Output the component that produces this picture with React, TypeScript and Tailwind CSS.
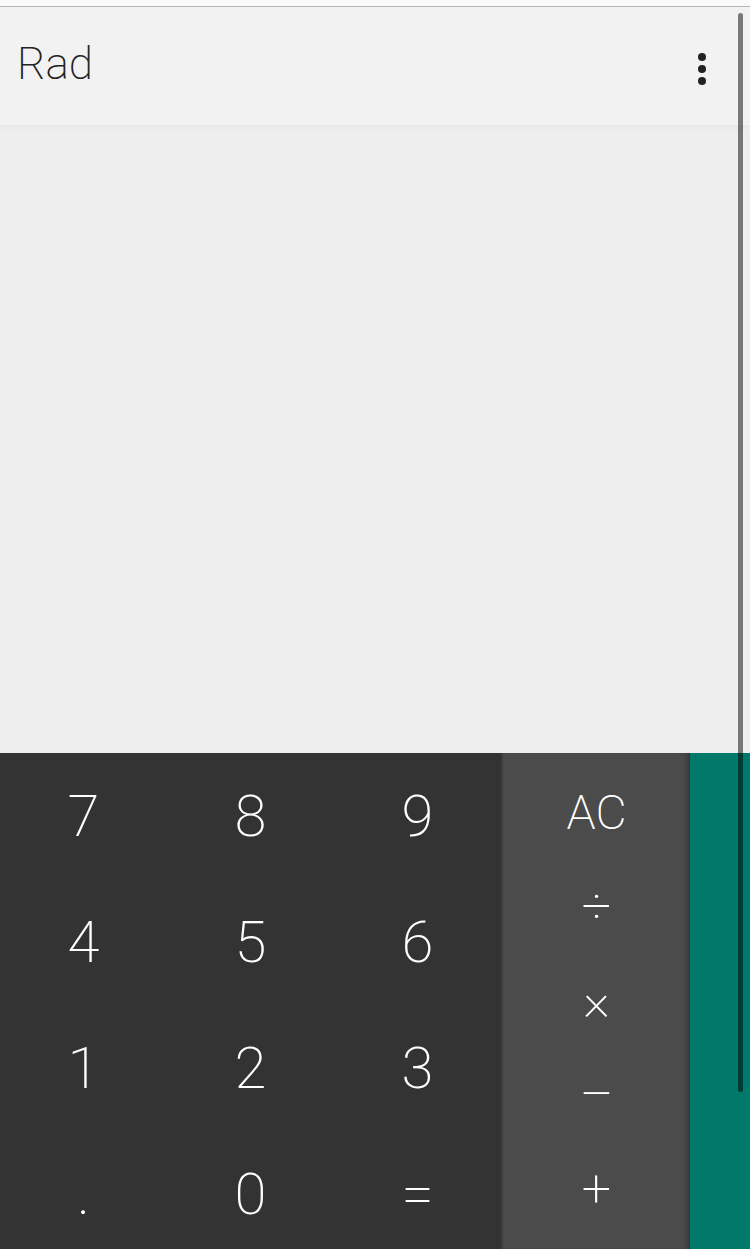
import React from "react";

const digits = ["7", "8", "9", "4", "5", "6", "1", "2", "3", ".", "0", "="];
const ops = ["AC", "÷", "×", "–", "+"];

export default function App() {
  return (
    <div
      className="relative w-[750px] h-[1249px] overflow-hidden flex flex-col bg-[#eeeeee]"
      style={{ fontFamily: "Roboto, 'Noto Sans', sans-serif" }}
    >
      {/* status strip */}
      <div className="h-[7px] bg-[#fafafa] border-b border-[#b8b8b8] shrink-0" />

      {/* display */}
      <div className="flex-1 flex flex-col bg-[#eeeeee]">
        <div className="h-[118px] bg-[#f2f2f2] shadow-[0_2px_6px_rgba(0,0,0,0.04)] flex items-start justify-between pl-[17px] pr-[44px] pt-[31px]">
          <span className="text-[44px] leading-[52px] font-extralight text-[#222]">Rad</span>
          <div className="flex flex-col gap-[4px] pt-[15px]">
            <span className="w-[8px] h-[8px] rounded-full bg-[#222]" />
            <span className="w-[8px] h-[8px] rounded-full bg-[#222]" />
            <span className="w-[8px] h-[8px] rounded-full bg-[#222]" />
          </div>
        </div>
      </div>

      {/* keypad */}
      <div className="h-[496px] flex shrink-0 overflow-hidden">
        <div className="w-[501px] grid grid-cols-3 grid-rows-[repeat(4,126px)] bg-[#333333]">
          {digits.map((d) => (
            <div key={d} className="flex items-center justify-center text-white text-[58px] font-extralight leading-none">
              {d}
            </div>
          ))}
        </div>
        <div className="w-[189px] bg-[#4b4b4b] flex flex-col pt-[13px] border-l-2 border-[#3d3d3d] shadow-[inset_-6px_0_6px_-4px_rgba(0,0,0,0.35)]">
          {ops.map((o) => (
            <div
              key={o}
              className={`h-[94px] flex items-center justify-center text-white font-extralight leading-none ${
                o === "AC" ? "text-[48px]" : "text-[52px]"
              }`}
            >
              {o}
            </div>
          ))}
        </div>
        <div className="flex-1 bg-[#00796b]" />
      </div>

      {/* scrollbar overlay */}
      <div className="absolute left-[738px] top-[13px] w-[5px] h-[1079px] rounded-full bg-black/50" />
    </div>
  );
}
